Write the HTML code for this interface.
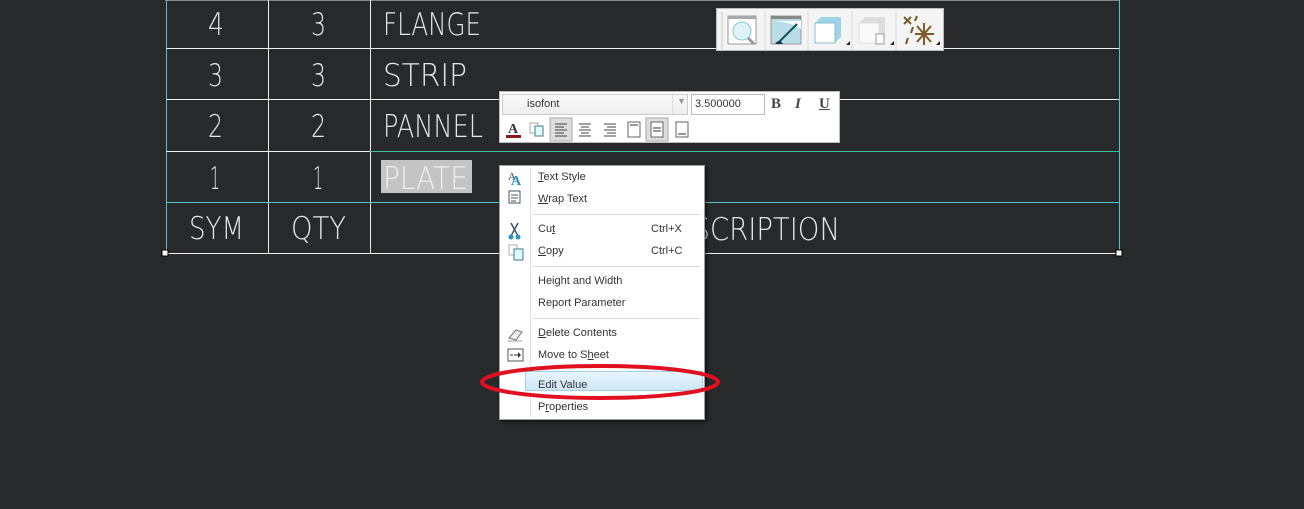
<!DOCTYPE html>
<html><head><meta charset="utf-8"><style>
body{margin:0;width:1304px;height:509px;background:#27292b;overflow:hidden;position:relative;font-family:"Liberation Sans",sans-serif}
.abs{position:absolute}
.menu{left:499px;top:165px;width:204px;height:253px;background:#fff;border:1px solid #a0a0a0;box-shadow:2px 2px 3px rgba(0,0,0,.5)}
.menu .gut{position:absolute;left:30px;top:2px;bottom:2px;width:1px;background:#e2e3e3}
.mi{position:absolute;left:38px;font-size:11px;color:#333}
.sc{position:absolute;left:151px;font-size:11px;color:#333}
.sep{position:absolute;left:33px;right:4px;height:1px;background:#d8d8d8}
u{text-decoration:underline}
</style></head><body>
<svg class="abs" style="left:0;top:0" width="1304" height="509">
<line x1="165" y1="0.5" x2="1120" y2="0.5" stroke="#888"/>
<g stroke-width="1">
<line x1="166.5" y1="0" x2="166.5" y2="253" stroke="#4fc7c7"/>
<line x1="1119.5" y1="0" x2="1119.5" y2="253" stroke="#4fc7c7"/>
<line x1="268.5" y1="0" x2="268.5" y2="253" stroke="#eee"/>
<line x1="370.5" y1="0" x2="370.5" y2="253" stroke="#eee"/>
<line x1="166" y1="48.5" x2="1119" y2="48.5" stroke="#eee"/>
<line x1="166" y1="99.5" x2="1119" y2="99.5" stroke="#eee"/>
<line x1="166" y1="151.5" x2="370" y2="151.5" stroke="#eee"/>
<line x1="370" y1="151.5" x2="1119" y2="151.5" stroke="#3fbf8f"/>
<line x1="166" y1="202.5" x2="1119" y2="202.5" stroke="#4fc7c7"/>
<line x1="166" y1="253.5" x2="1119" y2="253.5" stroke="#eee"/>
</g>
<rect x="162" y="250" width="6" height="6" fill="#fff" stroke="#000"/>
<rect x="1116" y="250" width="6" height="6" fill="#fff" stroke="#000"/>
<rect x="381" y="160" width="91" height="33" fill="#c4c4c4"/>
<g fill="#e4e6e7" font-family="DejaVu Sans" font-size="31" style="font-weight:200">
<text x="208" y="35" textLength="16" lengthAdjust="spacingAndGlyphs">4</text>
<text x="311" y="35" textLength="15" lengthAdjust="spacingAndGlyphs">3</text>
<text x="383" y="35" textLength="98" lengthAdjust="spacingAndGlyphs">FLANGE</text>
<text x="208" y="86" textLength="15" lengthAdjust="spacingAndGlyphs">3</text>
<text x="311" y="86" textLength="15" lengthAdjust="spacingAndGlyphs">3</text>
<text x="383" y="86" textLength="84" lengthAdjust="spacingAndGlyphs">STRIP</text>
<text x="208" y="137" textLength="15" lengthAdjust="spacingAndGlyphs">2</text>
<text x="311" y="137" textLength="15" lengthAdjust="spacingAndGlyphs">2</text>
<text x="383" y="137" textLength="100" lengthAdjust="spacingAndGlyphs">PANNEL</text>
<text x="210" y="189" textLength="10" lengthAdjust="spacingAndGlyphs">1</text>
<text x="313" y="189" textLength="10" lengthAdjust="spacingAndGlyphs">1</text>
<text x="383" y="189" textLength="85" lengthAdjust="spacingAndGlyphs" fill="#eeeeee">PLATE</text>
<text x="189" y="239" textLength="55" lengthAdjust="spacingAndGlyphs">SYM</text>
<text x="291" y="239" textLength="55" lengthAdjust="spacingAndGlyphs">QTY</text>
<text x="654" y="240" textLength="186" lengthAdjust="spacingAndGlyphs">DESCRIPTION</text>
</g>
</svg>

<div class="abs" style="left:716px;top:8px;width:228px;height:43px;background:#f4f4f4;border:1px solid #bbb;box-sizing:border-box">
<svg width="228" height="43">
<line x1="5" y1="3" x2="5" y2="40" stroke="#ccc"/>
<g stroke="#ddd"><line x1="48" y1="2" x2="48" y2="41"/><line x1="91" y1="2" x2="91" y2="41"/><line x1="135" y1="2" x2="135" y2="41"/><line x1="179" y1="2" x2="179" y2="41"/></g>
<rect x="11" y="7" width="28" height="28" fill="#fff" stroke="#999"/><rect x="11" y="7" width="28" height="3" fill="#aaa"/>
<circle cx="25" cy="22" r="9" fill="#dff2f8" stroke="#8cc"/><line x1="31" y1="29" x2="37" y2="35" stroke="#999" stroke-width="3"/>
<rect x="54" y="7" width="30" height="28" fill="#b9dce8" stroke="#999"/><rect x="54" y="7" width="30" height="3" fill="#888"/>
<path d="M54 12 Q72 12 84 20 L84 12 Z" fill="#fff"/><line x1="62" y1="33" x2="80" y2="15" stroke="#155" stroke-width="2"/><path d="M58 35 Q62 29 66 35Z" fill="#135"/>
<path d="M98 14 L104 8 L124 8 L124 28 L118 34 L98 34Z" fill="#9fd3e6"/><rect x="98" y="14" width="20" height="20" fill="#fff" stroke="#8bc"/>
<path d="M142 14 L148 8 L168 8 L168 28 L162 34 L142 34Z" fill="#ddd"/><rect x="142" y="14" width="20" height="20" fill="#fafafa" stroke="#ddd"/><rect x="159" y="25" width="8" height="10" fill="#fff" stroke="#999"/>
<g stroke="#7a5a2a" stroke-width="2"><line x1="187" y1="8" x2="194" y2="15"/><line x1="194" y1="8" x2="187" y2="15"/><line x1="200" y1="7" x2="198" y2="12"/><line x1="196" y1="18" x2="194" y2="24"/><line x1="191" y1="29" x2="189" y2="35"/><line x1="207" y1="14" x2="207" y2="36"/><line x1="198" y1="25" x2="217" y2="25"/><line x1="200" y1="17" x2="214" y2="33"/><line x1="214" y1="17" x2="200" y2="33"/></g>
<g fill="#222"><path d="M129 36 L133 32 L133 36Z"/><path d="M173 36 L177 32 L177 36Z"/><path d="M219 36 L223 32 L223 36Z"/></g>
</svg></div>

<div class="abs" style="left:499px;top:91px;width:341px;height:52px;background:#fff;border:1px solid #bbb;box-sizing:border-box">
<div class="abs" style="left:2px;top:2px;width:186px;height:21px;background:linear-gradient(#fafafa,#eee);border:1px solid #ccc;box-sizing:border-box;font-size:11px;color:#333;line-height:19px;padding-left:24px">isofont</div>
<div class="abs" style="left:172px;top:3px;width:1px;height:19px;background:#ddd"></div>
<div class="abs" style="left:177px;top:4px;font-size:9px;color:#999">▼</div>
<div class="abs" style="left:191px;top:2px;width:74px;height:21px;border:1px solid #bbb;box-sizing:border-box;font-size:11px;color:#333;line-height:19px;padding-left:3px">3.500000</div>
<div class="abs" style="left:271px;top:4px;font:bold 15px 'Liberation Serif',serif;color:#444">B</div>
<div class="abs" style="left:295px;top:4px;font:italic bold 15px 'Liberation Serif',serif;color:#444">I</div>
<div class="abs" style="left:319px;top:4px;font:bold 15px 'Liberation Serif',serif;color:#444;text-decoration:underline">U</div>
<svg class="abs" style="left:0;top:25px" width="200" height="25">
<text x="8" y="16" font-family="Liberation Serif" font-weight="bold" font-size="14" fill="#333">A</text><rect x="6" y="18" width="15" height="3" fill="#8b1a1a"/>
<rect x="30" y="6" width="8" height="10" fill="#fff" stroke="#aaa"/><rect x="35" y="9" width="8" height="10" fill="#dff" stroke="#478"/>
<rect x="50" y="1" width="22" height="23" fill="#ddd" stroke="#aaa"/><rect x="146" y="1" width="22" height="23" fill="#ddd" stroke="#aaa"/>
<g stroke="#444"><path d="M55 7h12M55 10h9M55 13h12M55 16h9M55 19h12"/><path d="M79 7h12M81 10h8M79 13h12M81 16h8M79 19h12"/><path d="M104 7h12M107 10h9M104 13h12M107 16h9M104 19h12"/></g>
<rect x="128" y="5" width="12" height="15" fill="#fff" stroke="#666"/><line x1="130" y1="8" x2="138" y2="8" stroke="#333"/>
<rect x="151" y="5" width="12" height="15" fill="#fff" stroke="#666"/><path d="M153 11h8M153 14h8" stroke="#333"/>
<rect x="176" y="5" width="12" height="15" fill="#fff" stroke="#666"/><path d="M178 17h8" stroke="#333"/>
</svg>
</div>

<div class="abs menu">
<div class="gut"></div>
<svg class="abs" style="left:0;top:0" width="30" height="253">
<text x="8" y="14" font-family="Liberation Serif" font-size="11" fill="#246">A</text><text x="11" y="19" font-family="Liberation Serif" font-size="14" font-weight="bold" fill="#2a8fc0">A</text>
<rect x="9" y="25" width="11" height="12" fill="#fff" stroke="#456"/><path d="M11 29h7M11 32h7M11 35h5" stroke="#456"/>
<path d="M11 57 L18 70 M18 57 L11 70" stroke="#456" stroke-width="1.5"/><circle cx="11" cy="71" r="2.5" fill="#2a8fc0"/><circle cx="18" cy="71" r="2.5" fill="#2a8fc0"/>
<rect x="9" y="79" width="8" height="10" fill="#fff" stroke="#aaa"/><rect x="14" y="83" width="9" height="11" fill="#dff" stroke="#478"/>
<path d="M9 172 L16 164 L22 166 L16 174 Z" fill="#eee" stroke="#777"/><line x1="8" y1="175" x2="22" y2="175" stroke="#999"/>
<rect x="8" y="183" width="15" height="12" fill="#fff" stroke="#555"/><path d="M10 189h3M14 189h5" stroke="#333"/><path d="M18 186l3 3-3 3z" fill="#333"/>
</svg>
<div class="mi" style="top:5px"><u>T</u>ext Style</div>
<div class="mi" style="top:27px"><u>W</u>rap Text</div>
<div class="sep" style="top:48px"></div>
<div class="mi" style="top:57px">Cu<u>t</u></div><div class="sc" style="top:57px">Ctrl+X</div>
<div class="mi" style="top:79px"><u>C</u>opy</div><div class="sc" style="top:79px">Ctrl+C</div>
<div class="sep" style="top:100px"></div>
<div class="mi" style="top:109px">Height and Width</div>
<div class="mi" style="top:131px">Report Parameter</div>
<div class="sep" style="top:152px"></div>
<div class="mi" style="top:161px"><u>D</u>elete Contents</div>
<div class="mi" style="top:183px">Move to S<u>h</u>eet</div>
<div class="abs" style="left:25px;top:205px;width:178px;height:20px;background:linear-gradient(#e8f4fc,#cde8f8);border:1px solid #9fcfea;box-sizing:border-box"></div>
<div class="mi" style="top:213px">Edit Value</div>
<div class="mi" style="top:235px">P<u>r</u>operties</div>
</div>
<svg class="abs" style="left:0;top:0" width="1304" height="509">
<ellipse cx="600" cy="382" rx="118" ry="16" fill="none" stroke="#e01020" stroke-width="4"/>
</svg>
</body></html>
